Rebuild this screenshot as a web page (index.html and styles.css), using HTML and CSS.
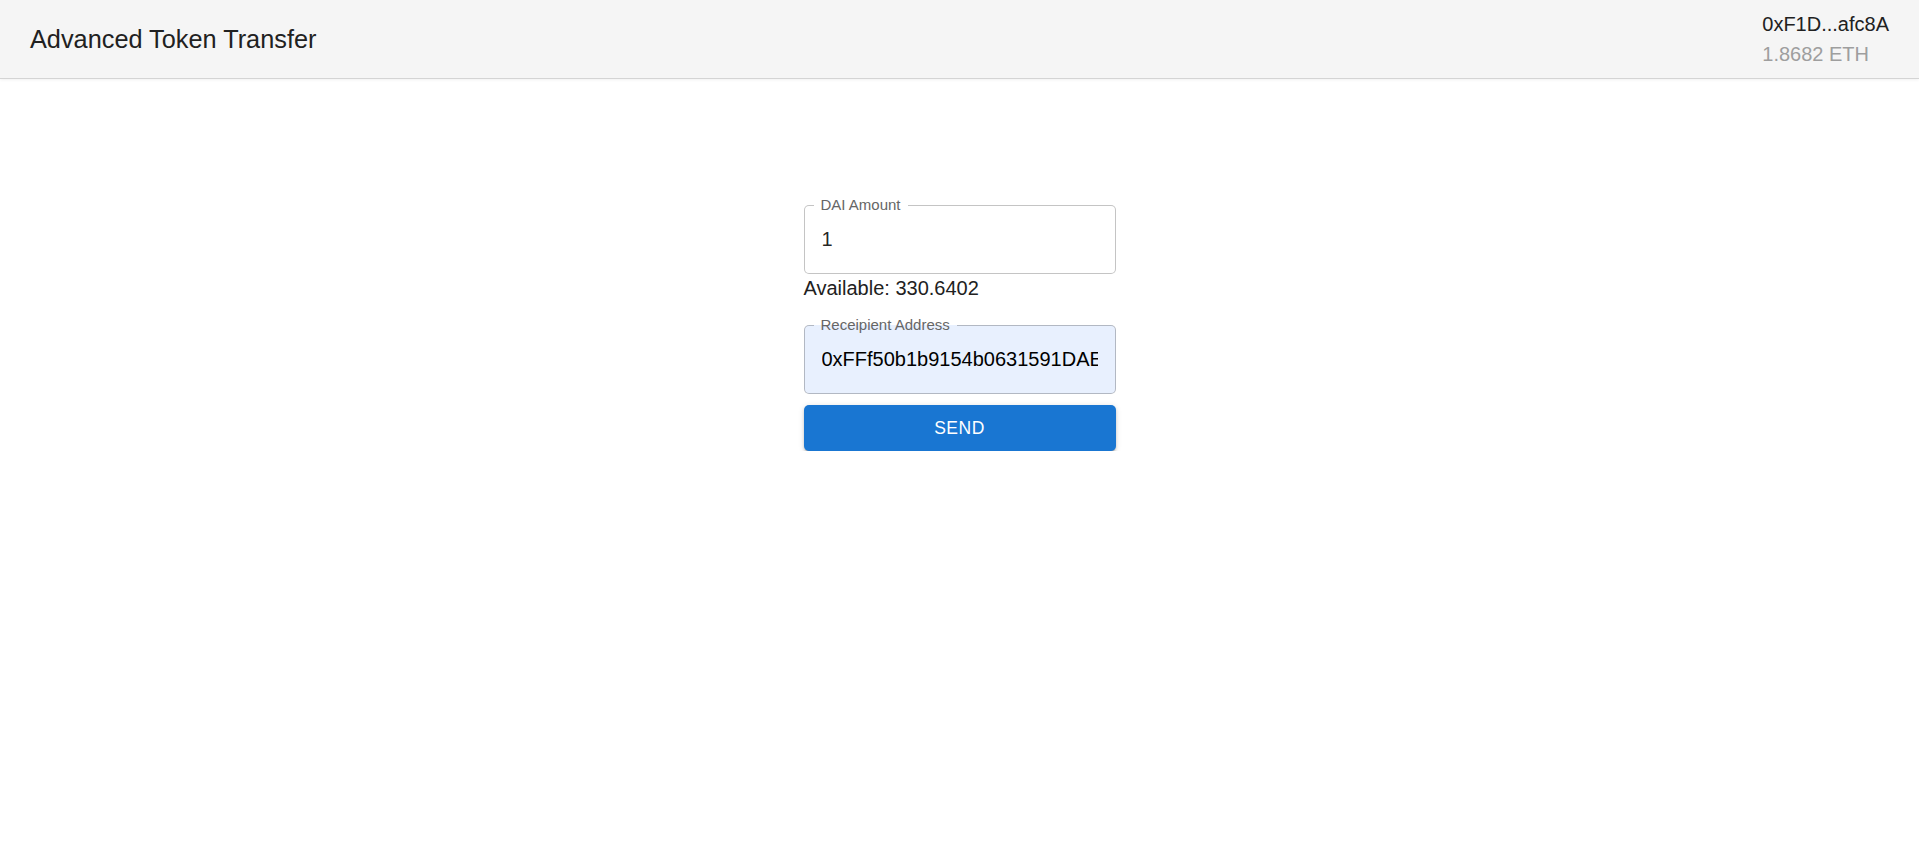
FILE: index.html
```html
<!DOCTYPE html>
<html lang="en">
<head>
  <meta charset="UTF-8">
  <title>Advanced Token Transfer</title>
  <meta name="viewport" content="width=device-width, initial-scale=1.0">
  <link rel="stylesheet" href="styles.css">
</head>
<body>
  <header class="appbar">
    <h1 class="app-title">Advanced Token Transfer</h1>
    <div class="account">
      <div class="account-address">0xF1D...afc8A</div>
      <div class="account-balance">1.8682 ETH</div>
    </div>
  </header>

  <main class="page">
    <form class="transfer-form" onsubmit="return false;">
      <fieldset class="field">
        <legend>DAI Amount</legend>
        <input type="text" value="1">
      </fieldset>
      <p class="available">Available: 330.6402</p>

      <fieldset class="field field-filled">
        <legend>Receipient Address</legend>
        <input type="text" value="0xFFf50b1b9154b0631591DAEcD06B8b5c2A3e9d61">
      </fieldset>

      <button type="submit" class="btn-send">SEND</button>
    </form>
  </main>
</body>
</html>
```

FILE: styles.css
```css
body { margin: 0; font-family: "Liberation Sans", Arial, sans-serif; background: #fff; color: rgba(0, 0, 0, 0.87); }

.appbar { display: flex; align-items: center; justify-content: space-between; height: 78px; padding: 0 30px; background: #f5f5f5; border-bottom: 1px solid #d4d4d4; box-shadow: 0 1px 3px rgba(0, 0, 0, 0.06); }
.app-title { margin: 0; font-size: 25.3px; font-weight: normal; line-height: 40px; color: #212121; }
.account { font-size: 20px; line-height: 30px; }
.account-address { color: #212121; }
.account-balance { color: #9e9e9e; }

.page { display: flex; justify-content: center; padding-top: 117px; }
.transfer-form { display: flex; flex-direction: column; width: 312px; }

.field { margin: 0; padding: 0 17px 0 9px; border: 1px solid rgba(0, 0, 0, 0.23); border-radius: 5px; background: #fff; }
.field legend { padding: 0 7px; font-size: 15px; line-height: 18px; color: #666; }
.field input { display: block; box-sizing: border-box; width: 100%; height: 29px; margin: 11px 0 19px; padding: 0 0 0 8px; border: 0; outline: none; background: transparent; font-family: inherit; font-size: 20px; color: rgba(0, 0, 0, 0.87); }
.field-filled { background: #e8f0fe; }
.field-filled input { color: #000; }

.available { margin: 0 0 14px; font-size: 20px; line-height: 28px; color: #212121; }

.btn-send { height: 46px; margin-top: 11px; border: 0; border-radius: 5px; background: #1976d2; color: #fff; font-family: inherit; font-size: 17.5px; letter-spacing: 0.5px; cursor: pointer; box-shadow: 0 4px 2px -2px rgba(0, 0, 0, 0.22), 0 2px 3px 0 rgba(0, 0, 0, 0.16), 0 1px 6px 0 rgba(0, 0, 0, 0.12); }
```
